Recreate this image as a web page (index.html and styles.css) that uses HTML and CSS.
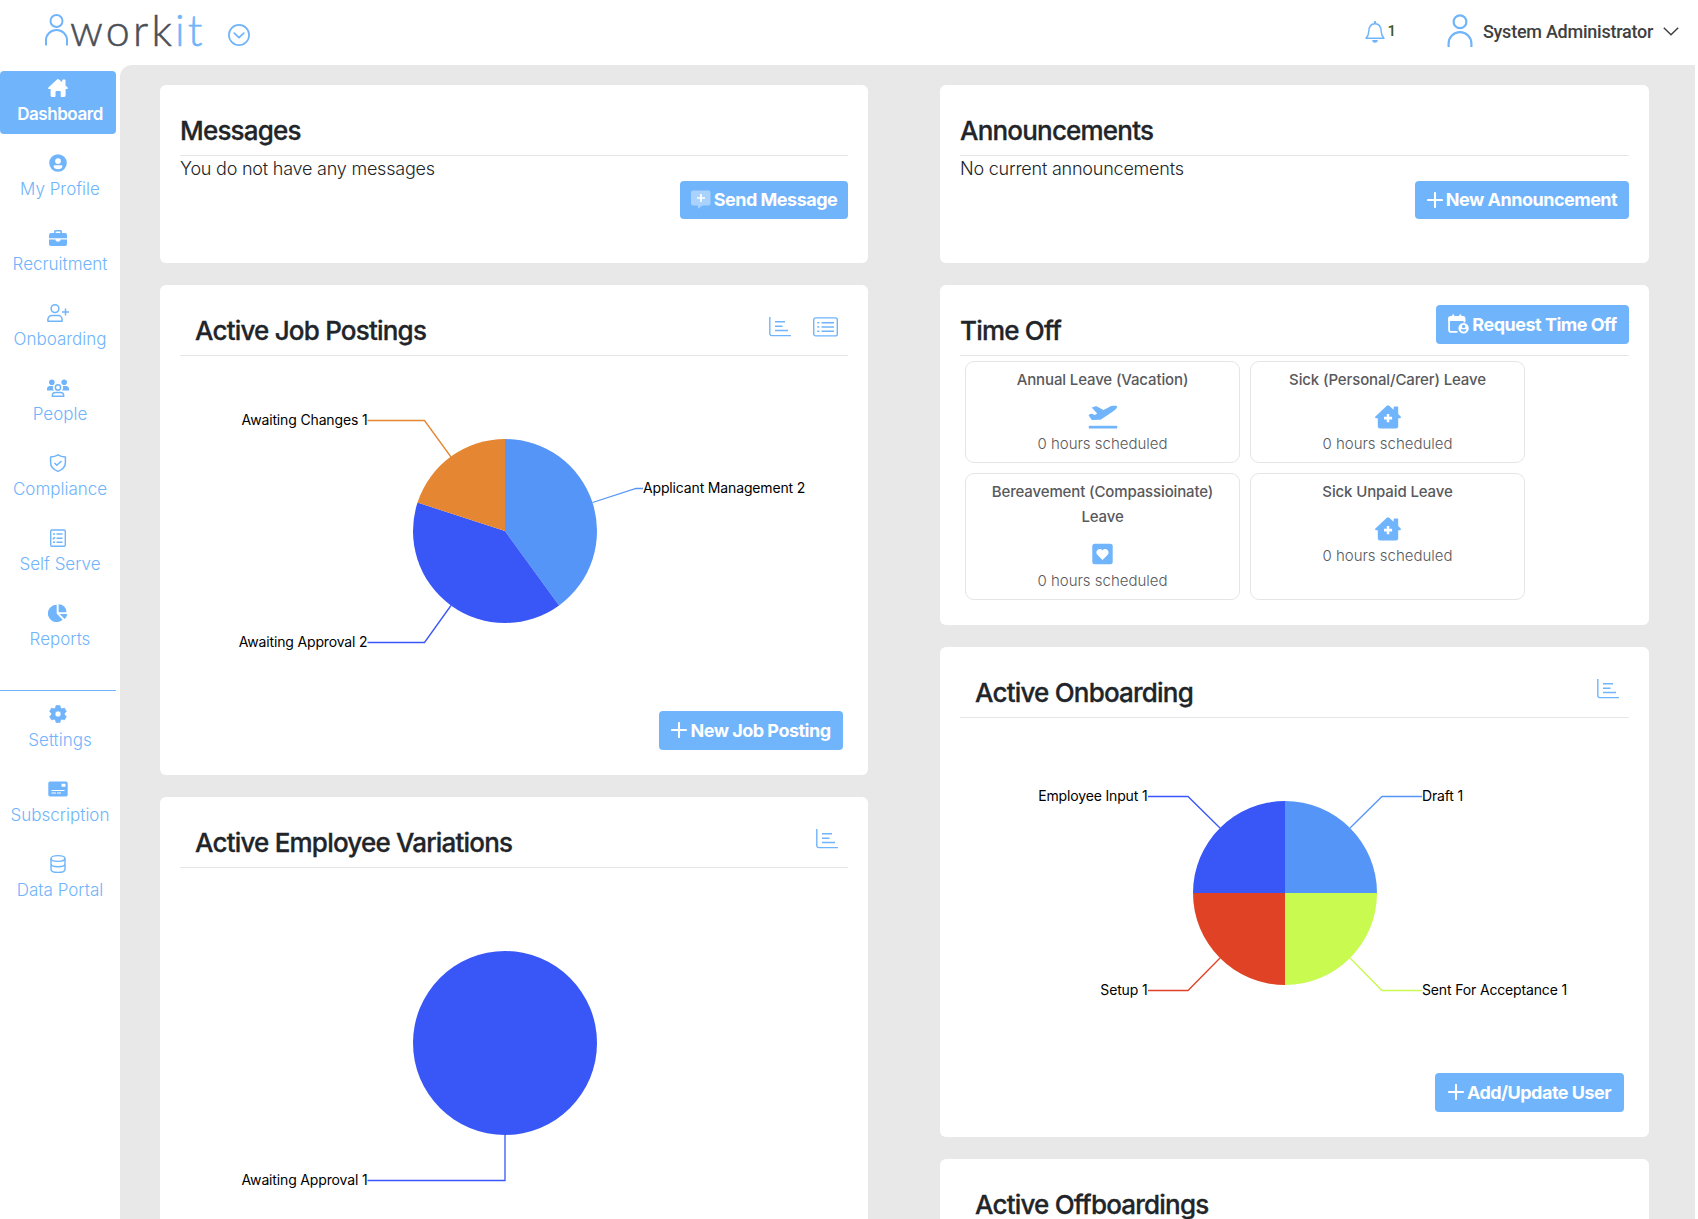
FILE: index.html
```html
<!DOCTYPE html>
<html lang="en">
<head>
  <meta charset="UTF-8">
  <meta name="viewport" content="width=device-width, initial-scale=1.0">
  <title>Workit - Dashboard</title>
  <link rel="stylesheet" href="styles.css">
</head>
<body>
  <!-- shared icons -->
  <svg class="sprite" aria-hidden="true">
    <symbol id="i-person" viewBox="0 0 26 34">
      <circle cx="13" cy="7.8" r="6.4" fill="none" stroke="currentColor" stroke-width="2.2"/>
      <path d="M1.6 33V29.5a11.4 11.4 0 0 1 22.8 0V33" fill="none" stroke="currentColor" stroke-width="2.2"/>
    </symbol>
    <symbol id="i-bars" viewBox="0 0 22 20">
      <path d="M.8 0v16.6a2 2 0 0 0 2 2H22M6 4.8h10M6 9.3h7.5M6 13.5h13" fill="none" stroke="currentColor" stroke-width="1.4"/>
    </symbol>
    <symbol id="i-plus" viewBox="0 0 16 16">
      <path d="M8 1v14M1 8h14" fill="none" stroke="currentColor" stroke-width="2.1" stroke-linecap="round"/>
    </symbol>
    <symbol id="i-clinic" viewBox="0 0 26 24">
      <path fill-rule="evenodd" d="M11.8.7a1.8 1.8 0 0 1 2.4 0L18.6 4.8V2.4a.8.8 0 0 1 .8-.8h3a.8.8 0 0 1 .8.8v6.7l2.4 2.5c.6.7.2 1.6-.7 1.6h-1.7v7.8a2.5 2.5 0 0 1-2.5 2.5H5.3a2.5 2.5 0 0 1-2.5-2.5v-7.8H1.1c-.9 0-1.3-.9-.7-1.600zM11.800 9v2.800H9v2.600h2.800v2.900h2.500v-2.900h2.800v-2.600h-2.800V9z" fill="currentColor"/>
    </symbol>
  </svg>

  <header class="topbar">
    <div class="brand">
      <svg class="brand-icon" viewBox="0 0 23 32">
        <circle cx="11.5" cy="7" r="6" fill="none" stroke="currentColor" stroke-width="2"/>
        <path d="M1 31.5V26a10.500 10 0 0 1 21 0v5.500" fill="none" stroke="currentColor" stroke-width="2"/>
      </svg>
      <span class="brand-name">work<span class="brand-it">it</span></span>
      <svg class="brand-toggle" viewBox="0 0 22 22" fill="none" stroke="currentColor" stroke-width="1.7">
        <circle cx="11" cy="11" r="10.100"/>
        <path d="M6.200 9.200l4.800 4.500 4.800-4.500" stroke-linecap="round" stroke-linejoin="round"/>
      </svg>
    </div>
    <div class="account">
      <svg class="bell" viewBox="0 0 20 22">
        <path d="M1 17.200h18c-1.700-1.600-2.600-3.300-2.700-6.200C16.200 5.800 14.300 2.700 10 2.700S3.800 5.800 3.700 11C3.600 13.900 2.700 15.600 1 17.200z" fill="none" stroke="currentColor" stroke-width="1.500" stroke-linejoin="round"/>
        <path d="M8.800 1.200a1.200 1.200 0 0 1 2.400 0v1.300H8.800zM7.200 19h5.600a2.800 2.800 0 0 1-5.600 0z" fill="currentColor"/>
      </svg>
      <span class="bell-count">1</span>
      <svg class="avatar"><use href="#i-person"/></svg>
      <span class="user-name">System Administrator</span>
      <svg class="caret" viewBox="0 0 16 9"><path d="M.8.8L8 7.800 15.200.8" fill="none" stroke="currentColor" stroke-width="1.500"/></svg>
    </div>
  </header>

  <div class="layout">
    <nav class="sidebar">
      <a class="nav-item active">
        <svg viewBox="0 0 20 20"><path d="M9 1.500a1.500 1.500 0 0 1 2 0l3.200 2.800V2.500c0-.6.400-1 1-1h1.300c.6 0 1 .4 1 1v4.900l2.100 2c.7.700.3 1.600-.6 1.600h-1.400v6.500c0 .8-.6 1.400-1.400 1.400h-2.500c-.6 0-1-.4-1-1V14c0-.5-.4-.9-.9-.9H8.400c-.5 0-.9.4-.9.9v3.900c0 .6-.4 1-1 1H4c-.8 0-1.400-.6-1.400-1.400V11H1C.1 11-.3 10.100.4 9.400z" fill="currentColor"/></svg>
        <span>Dashboard</span>
      </a>
      <a class="nav-item">
        <svg viewBox="0 0 20 20"><path fill-rule="evenodd" d="M10 1.200a8.800 8.800 0 1 0 0 17.600 8.800 8.800 0 0 0 0-17.600zM10 5.200a2.900 2.900 0 1 1 0 5.800 2.900 2.900 0 0 1 0-5.800zM5.600 13.300c0-.6.500-1.100 1.100-1.100h6.600c.6 0 1.100.5 1.100 1.100 0 1.800-2 2.900-4.400 2.900s-4.400-1.100-4.400-2.900z" fill="currentColor"/></svg>
        <span>My Profile</span>
      </a>
      <a class="nav-item">
        <svg viewBox="0 0 20 20"><path fill-rule="evenodd" d="M7.500 2h5A1.500 1.500 0 0 1 14 3.500V5h3a2 2 0 0 1 2 2v3.200H1V7a2 2 0 0 1 2-2h3V3.500A1.500 1.500 0 0 1 7.500 2zM7.600 3.500V5h4.800V3.500z" fill="currentColor"/><path d="M1 11.500h6.500c0 3 5 3 5 0H19V16a2 2 0 0 1-2 2H3a2 2 0 0 1-2-2z" fill="currentColor"/></svg>
        <span>Recruitment</span>
      </a>
      <a class="nav-item">
        <svg class="wide" viewBox="0 0 22 20" fill="none" stroke="currentColor" stroke-width="1.500"><circle cx="8" cy="5.600" r="3.900"/><path d="M.9 18.200v-1.700c0-2.200 1.700-4 4-4h6.200c2.300 0 4 1.800 4 4v1.700zM15 9h7M18.500 5.500v7" stroke-linejoin="round"/></svg>
        <span>Onboarding</span>
      </a>
      <a class="nav-item">
        <svg class="wide" viewBox="0 0 22 20"><circle cx="4.800" cy="4.200" r="2.800" fill="currentColor"/><circle cx="17.200" cy="4.200" r="2.800" fill="currentColor"/><path d="M0 12.500V11c0-1.800 1.300-3 3-3h3.300c-.8 1.700-.5 3.300.8 4.500zM22 12.500V11c0-1.800-1.300-3-3-3h-3.300c.8 1.700.5 3.300-.8 4.500z" fill="currentColor"/><circle cx="11" cy="9.400" r="2.600" fill="none" stroke="currentColor" stroke-width="1.500"/><path d="M5.200 18.200c0-2.600 1.300-3.700 3.300-3.700h5c2 0 3.300 1.100 3.300 3.700z" fill="none" stroke="currentColor" stroke-width="1.400" stroke-linejoin="round"/></svg>
        <span>People</span>
      </a>
      <a class="nav-item">
        <svg viewBox="0 0 20 20" fill="none" stroke="currentColor" stroke-width="1.500" stroke-linejoin="round"><path d="M10 1.800c2.200 1.500 4.600 2 7.400 2.100v5.600c0 4.400-3.300 7.300-7.400 8.900-4.100-1.600-7.400-4.500-7.400-8.900V3.900c2.800-.1 5.200-.6 7.400-2.100z"/><path d="M6.500 10l2.300 2.300L13.500 8"/></svg>
        <span>Compliance</span>
      </a>
      <a class="nav-item">
        <svg viewBox="0 0 20 20" fill="none" stroke="currentColor" stroke-width="1.400"><rect x="2.700" y="2" width="14.600" height="16.300" rx="1.200"/><path d="M8.500 6h6M8.500 10.200h6M8.500 14.300h6M5 6h2M5 14.300h2M4.800 10l.8.800 1.500-1.700"/></svg>
        <span>Self Serve</span>
      </a>
      <a class="nav-item">
        <svg viewBox="0 0 20 20" fill="currentColor"><path d="M8.700 1.700v8.800l5.900 6.200A8.700 8.700 0 1 1 8.700 1.700z"/><path d="M10.600 1.200a8 8 0 0 1 7.900 8.100h-7.900z"/><path d="M11.600 11h7.700a8.500 8.500 0 0 1-2.700 5z"/></svg>
        <span>Reports</span>
      </a>
      <hr class="nav-divider">
      <a class="nav-item">
        <svg viewBox="0 0 20 20"><path fill-rule="evenodd" d="M8 1.500h4l.6 2.500 1.300.8 2.500-.8 2 3.500-1.900 1.700v1.600l1.900 1.700-2 3.500-2.500-.8-1.300.8-.6 2.500H8L7.400 16l-1.300-.8-2.500.8-2-3.500 1.900-1.700V9.200L1.600 7.500l2-3.500 2.500.8L7.400 4zM10 7a3 3 0 1 0 0 6 3 3 0 0 0 0-6z" fill="currentColor" stroke="currentColor" stroke-width=".6" stroke-linejoin="round"/></svg>
        <span>Settings</span>
      </a>
      <a class="nav-item">
        <svg viewBox="0 0 20 20"><path fill-rule="evenodd" d="M2 2.500h16a1.700 1.700 0 0 1 1.700 1.700v11.600a1.700 1.700 0 0 1-1.700 1.700H2A1.700 1.700 0 0 1 .3 15.800V4.200A1.700 1.700 0 0 1 2 2.500zM13.500 4.800v2.900h4V4.800zM3.500 11v1h13v-1zM3.500 13.500v1H8v-1zM9 13.500v1h4v-1z" fill="currentColor"/></svg>
        <span>Subscription</span>
      </a>
      <a class="nav-item">
        <svg viewBox="0 0 20 20" fill="none" stroke="currentColor" stroke-width="1.400"><ellipse cx="10" cy="4.500" rx="7" ry="2.900"/><path d="M3 4.500v10.700c0 1.900 3.100 3.200 7 3.200s7-1.300 7-3.200V4.500M3 9.800c0 1.700 3.100 2.900 7 2.900s7-1.200 7-2.900"/></svg>
        <span>Data Portal</span>
      </a>
    </nav>

    <main class="board">
      <div class="column">
        <section class="card card-short">
          <div class="card-head"><h2>Messages</h2></div>
          <p class="note">You do not have any messages</p>
          <div class="actions">
            <button class="btn send">
              <svg class="ic-msg" viewBox="0 0 20 19"><path d="M2 .5h15.500a2 2 0 0 1 2 2v11a2 2 0 0 1-2 2h-5.800L7 18.800v-3.300H2a2 2 0 0 1-2-2v-11a2 2 0 0 1 2-2z" fill="#a9d2fd"/><path d="M10 4v8M6 8h8" stroke="#fff" stroke-width="1.700"/></svg>Send Message</button>
          </div>
        </section>

        <section class="card card-chart">
          <div class="card-head inset">
            <h2>Active Job Postings</h2>
            <div class="head-icons">
              <svg class="ic-bars"><use href="#i-bars"/></svg>
              <svg class="ic-list" viewBox="0 0 25 20" fill="none" stroke="currentColor" stroke-width="1.400"><rect x=".7" y=".9" width="23.600" height="18" rx="2"/><path d="M8.500 5.700H21M8.500 10H21M8.500 14.200H21M4.300 5.700h2M4.300 10h2M4.300 14.200h2"/></svg>
            </div>
          </div>
          <svg class="chart" viewBox="0 0 668 355">
            <path d="M325 175V83a92 92 0 0 1 54.080 166.430z" fill="#5695f8"/>
            <path d="M325 175l54.080 74.430A92 92 0 0 1 237.500 146.570z" fill="#3956f6"/>
            <path d="M325 175l-87.500-28.430A92 92 0 0 1 325 83z" fill="#e48632"/>
            <path class="link" d="M412.500 146.500L456 132.500h7" stroke="#5695f8"/>
            <path class="link" d="M187.500 286.500h57l26.500-37" stroke="#3956f6"/>
            <path class="link" d="M187.500 64.500h57l26.500 36.500" stroke="#e48632"/>
            <text x="463" y="137">Applicant Management 2</text>
            <text class="end" x="187.500" y="291">Awaiting Approval 2</text>
            <text class="end" x="187.500" y="69">Awaiting Changes 1</text>
          </svg>
          <div class="actions"><button class="btn posting"><svg class="ic-plus"><use href="#i-plus"/></svg>New Job Posting</button></div>
        </section>

        <section class="card card-chart">
          <div class="card-head inset">
            <h2>Active Employee Variations</h2>
            <div class="head-icons"><svg class="ic-bars"><use href="#i-bars"/></svg></div>
          </div>
          <svg class="chart" viewBox="0 0 668 355">
            <circle cx="325" cy="175" r="92" fill="#3956f6"/>
            <path class="link" d="M325 266v46.500H187.500" stroke="#3956f6"/>
            <text class="end" x="187.500" y="317">Awaiting Approval 1</text>
          </svg>
        </section>
      </div>

      <div class="column">
        <section class="card card-short">
          <div class="card-head"><h2>Announcements</h2></div>
          <p class="note">No current announcements</p>
          <div class="actions"><button class="btn announce"><svg class="ic-plus"><use href="#i-plus"/></svg>New Announcement</button></div>
        </section>

        <section class="card card-leave">
          <div class="card-head">
            <h2>Time Off</h2>
            <button class="btn request">
              <svg class="ic-cal" viewBox="0 0 21 20"><path d="M9.500 17.800H3a1.900 1.900 0 0 1-1.900-1.900V4.500h15.300v4" fill="none" stroke="#fff" stroke-width="1.800"/><path d="M.2 7V4.500a2.400 2.400 0 0 1 2.400-2.400h1.600V.6h1.900v1.500h5.300V.6h1.900v1.500h1.600a2.400 2.400 0 0 1 2.400 2.400V7z" fill="#fff"/><path fill-rule="evenodd" d="M15.600 9a5.200 5.200 0 1 0 0 10.400 5.200 5.200 0 0 0 0-10.400zM15.600 10.700a1.700 1.700 0 1 1 0 3.400 1.700 1.700 0 0 1 0-3.400zM12.800 15.300h5.600c0 1.500-1.300 2.300-2.800 2.300s-2.800-.8-2.800-2.300z" fill="#fff"/></svg>Request Time Off</button>
          </div>
          <div class="leave-grid">
            <div class="leave">
              <h3>Annual Leave (Vacation)</h3>
              <svg class="ic-plane" viewBox="0 0 30 24"><path d="M.8 20.800h28.400v2.700H.8z"/><path d="M4.600 2.200l3.100-.9c.5-.1.900 0 1.300.3l6.400 3.500 5-2.700c2.800-1.500 5.700-1.800 8.200-1.400.6.100.8.600.5 1.100-.8 1.900-2.600 3.600-4.900 4.900l-10.500 6.900c-.9.600-1.800.9-2.900.9l-6 .2c-.6 0-1-.2-1.400-.6L.9 10.700c-.4-.5-.2-1.100.4-1.300l1.900-.6c.4-.1.800 0 1.200.2l2.300 1.100 2.500-1.600-4.900-5.200c-.4-.5-.3-.9.300-1.100z"/></svg>
              <p>0 hours scheduled</p>
            </div>
            <div class="leave">
              <h3>Sick (Personal/Carer) Leave</h3>
              <svg class="ic-clinic"><use href="#i-clinic"/></svg>
              <p>0 hours scheduled</p>
            </div>
            <div class="leave">
              <h3>Bereavement (Compassioinate) Leave</h3>
              <svg class="ic-heart" viewBox="0 0 21 21"><rect x=".3" y=".3" width="20.400" height="20.400" rx="2.500"/><path d="M10.500 16.600L5.300 11.200c-3-3.400 2-8 5.200-4.300 3.200-3.700 8.200.9 5.200 4.300z" fill="#fff"/></svg>
              <p>0 hours scheduled</p>
            </div>
            <div class="leave">
              <h3>Sick Unpaid Leave</h3>
              <svg class="ic-clinic"><use href="#i-clinic"/></svg>
              <p>0 hours scheduled</p>
            </div>
          </div>
        </section>

        <section class="card card-chart">
          <div class="card-head inset">
            <h2>Active Onboarding</h2>
            <div class="head-icons"><svg class="ic-bars"><use href="#i-bars"/></svg></div>
          </div>
          <svg class="chart" viewBox="0 0 668 355">
            <path d="M325 175V83a92 92 0 0 1 92 92z" fill="#5695f8"/>
            <path d="M325 175h92a92 92 0 0 1-92 92z" fill="#c8fa4f"/>
            <path d="M325 175v92a92 92 0 0 1-92-92z" fill="#df4224"/>
            <path d="M325 175h-92a92 92 0 0 1 92-92z" fill="#3956f6"/>
            <path class="link" d="M390 110l32-31.500h40" stroke="#5695f8"/>
            <path class="link" d="M390 240l32 32.500h40" stroke="#c8fa4f"/>
            <path class="link" d="M260 240l-32 32.500h-40" stroke="#df4224"/>
            <path class="link" d="M260 110l-32-31.500h-40" stroke="#3956f6"/>
            <text x="462" y="83">Draft 1</text>
            <text x="462" y="277">Sent For Acceptance 1</text>
            <text class="end" x="187.500" y="277">Setup 1</text>
            <text class="end" x="187.500" y="83">Employee Input 1</text>
          </svg>
          <div class="actions"><button class="btn add-user"><svg class="ic-plus"><use href="#i-plus"/></svg>Add/Update User</button></div>
        </section>

        <section class="card card-chart">
          <div class="card-head inset"><h2>Active Offboardings</h2></div>
        </section>
      </div>
    </main>
  </div>
</body>
</html>
```
FILE: styles.css
```css
/* Reset */
* {
  margin: 0;
  padding: 0;
  box-sizing: border-box;
}

body {
  height: 100vh;
  overflow: hidden;
  background: #fff;
  color: #212529;
  font-family: Inter, sans-serif;
  font-size: 18px;
}

svg {
  display: block;
  flex: none;
}

.sprite {
  display: none;
}

/* Top bar */
.topbar {
  display: flex;
  justify-content: space-between;
  height: 65px;
  padding: 0 19px 0 45px;
}

.brand {
  display: flex;
  align-items: flex-start;
  color: #70b4fb;
}

.brand-icon {
  width: 23px;
  height: 32px;
  margin-top: 14px;
}

.brand-name {
  width: 134px;
  margin-left: 2px;
  color: #4b4f56;
  font-family: Lato, sans-serif;
  font-size: 43px;
  font-weight: 300;
  line-height: 60px;
  letter-spacing: 3.2px;
  white-space: nowrap;
  -webkit-text-stroke: 0.5px;
}

.brand-it {
  color: #70b4fb;
}

.brand-toggle {
  width: 22px;
  height: 22px;
  margin: 24px 0 0 24px;
}

.account {
  display: flex;
  align-items: center;
  height: 63px;
  color: #70b4fb;
  font-family: Roboto, sans-serif;
  font-weight: 500;
}

.bell {
  width: 20px;
  height: 22px;
}

.bell-count {
  margin: -2px 0 0 2px;
  color: #3a5a1c;
  font-size: 15px;
}

.avatar {
  width: 26px;
  height: 34px;
  margin: -2px 10px 0 51px;
}

.user-name {
  color: #404040;
  font-size: 18px;
  letter-spacing: -0.25px;
}

.caret {
  width: 16px;
  height: 9px;
  margin-left: 10px;
  color: #404040;
}

/* Sidebar */
.layout {
  display: flex;
  height: calc(100vh - 65px);
}

.sidebar {
  width: 120px;
  padding: 6px 4px 0 0;
  flex: none;
}

.nav-item {
  display: flex;
  flex-direction: column;
  align-items: center;
  height: 63px;
  margin-bottom: 12px;
  padding-top: 7px;
  border-radius: 4px;
  color: #70b4fb;
  font-size: 17px;
  font-weight: 300;
}

.nav-item svg {
  width: 20px;
  height: 20px;
}

.nav-item svg.wide {
  width: 22px;
}

.nav-item span {
  margin-top: 4px;
  padding-left: 4px;
  line-height: 24px;
}

.nav-item.active {
  background: #70b4fb;
  color: #fff;
  font-weight: 600;
  letter-spacing: -0.45px;
}

.nav-divider {
  height: 1px;
  margin: 31px 0 6px;
  border: none;
  background: #70b4fb;
}

/* Board */
.board {
  display: grid;
  grid-template-columns: 708px 1fr;
  gap: 72px;
  flex: 1;
  margin-right: 3px;
  padding: 20px 46px 0 40px;
  overflow: hidden;
  background: #e8e8e8;
  border-top-left-radius: 12px;
}

.column {
  display: flex;
  flex-direction: column;
  gap: 22px;
}

.card {
  flex: none;
  padding: 0 20px;
  background: #fff;
  border-radius: 6px;
}

.card-short {
  height: 178px;
}

.card-chart {
  height: 490px;
}

.card-leave {
  height: 340px;
}

.card-head {
  display: flex;
  justify-content: space-between;
  height: 71px;
  border-bottom: 1px solid #e5e6e7;
}

.card-head.inset {
  padding: 0 10px 0 15px;
}

h2 {
  padding-top: 29px;
  font-size: 26px;
  font-weight: 500;
  line-height: 34px;
  letter-spacing: -0.8px;
  -webkit-text-stroke: 0.3px;
}

.head-icons {
  display: flex;
  gap: 22px;
  padding-top: 32px;
  color: #70b4fb;
}

.ic-bars {
  width: 22px;
  height: 20px;
}

.ic-list {
  width: 25px;
  height: 20px;
}

.note {
  height: 25px;
  font-weight: 350;
  line-height: 26px;
  letter-spacing: -0.22px;
}

/* Buttons */
.actions {
  display: flex;
  justify-content: flex-end;
}

.card-chart .actions {
  padding-right: 5px;
}

.btn {
  display: flex;
  align-items: center;
  justify-content: center;
  gap: 3px;
  height: 39px;
  padding-bottom: 1px;
  border: none;
  border-radius: 4px;
  background: #70b4fb;
  color: #fff;
  font-family: inherit;
  font-size: 18px;
  font-weight: 700;
  letter-spacing: -0.5px;
  white-space: nowrap;
  cursor: pointer;
}

.card-short .btn {
  height: 38px;
}

.send { width: 168px; }
.announce { width: 214px; }
.posting { width: 184px; }
.add-user { width: 189px; }

.request {
  width: 193px;
  margin-top: 20px;
}

.ic-plus {
  width: 16px;
  height: 16px;
}

.ic-msg {
  width: 20px;
  height: 19px;
}

.ic-cal {
  width: 21px;
  height: 20px;
}

/* Pie charts */
.chart {
  width: 668px;
  height: 355px;
}

.chart .link {
  fill: none;
  stroke-width: 1.3;
}

.chart text {
  fill: #000;
  font-size: 14px;
  letter-spacing: -0.15px;
}

.chart .end {
  text-anchor: end;
}

/* Leave tiles */
.leave-grid {
  display: grid;
  grid-template-columns: 275px 275px;
  grid-template-rows: 102px 127px;
  gap: 10px;
  padding: 5px 0 0 5px;
}

.leave {
  display: flex;
  flex-direction: column;
  align-items: center;
  padding: 5px 20px 0;
  border: 1px solid #e5e5e8;
  border-radius: 9px;
  color: #58595c;
  font-size: 15px;
  line-height: 25px;
  text-align: center;
}

.leave h3 {
  font-size: 15px;
  font-weight: 500;
  letter-spacing: -0.13px;
}

.leave svg {
  height: 24px;
  margin: 13px 0 2px;
  color: #70b4fb;
  fill: #70b4fb;
}

.leave p {
  font-weight: 350;
}

.ic-plane { width: 30px; }
.ic-clinic { width: 26px; }
.ic-heart { width: 21px; }
```
